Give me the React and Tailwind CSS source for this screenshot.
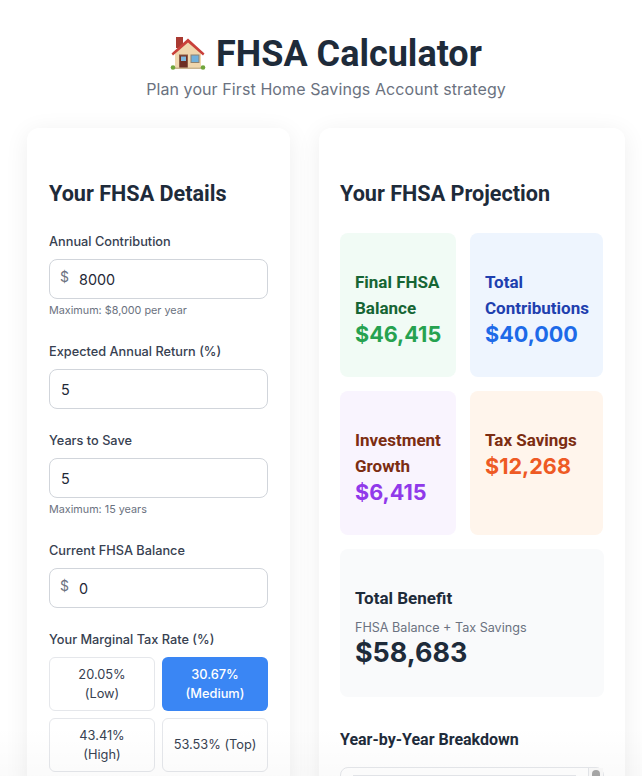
const House = () => (
  <svg width="36" height="36" viewBox="0 0 36 36" className="shrink-0">
    <rect x="6" y="1" width="7" height="11" fill="#a93a32" />
    <path d="M5 17 L18 5 L31 17 V32 H5 Z" fill="#efd6ad" />
    <path d="M1.5 17.5 L18 2.5 L34.5 17.5 L33 19.5 L18 6.5 L3 19.5 Z" fill="#c9403a" />
    <rect x="9" y="18.5" width="9" height="14" fill="#8a5a44" />
    <rect x="10" y="19.5" width="7" height="13" fill="#6e2f25" />
    <rect x="11" y="20.5" width="5" height="4.5" fill="#7cb7de" />
    <rect x="20.5" y="18.5" width="9" height="8.5" fill="#8d8272" />
    <rect x="21.5" y="19.5" width="7" height="6.5" fill="#6fb0dc" />
    <rect x="5" y="31.5" width="26" height="1.5" fill="#c9b48f" />
    <circle cx="3" cy="31.5" r="2.3" fill="#6fa53a" />
    <circle cx="33" cy="31.5" r="2.3" fill="#6fa53a" />
  </svg>
)

const Field = ({ label, value, prefix, hint }) => (
  <div className={hint ? 'mb-[22px]' : 'mb-[21px]'}>
    <label className="block text-[12.75px] leading-[22px] font-medium text-[#374151] mb-[6px]">{label}</label>
    <div className="relative">
      {prefix && <span className="absolute left-[11px] top-[8px] text-sm text-[#6b7280]">$</span>}
      <input
        readOnly
        value={value}
        className={`w-full h-[40px] rounded-lg border border-[#d1d5db] bg-white text-[#1f2937] text-[14.4px] outline-none ${prefix ? 'pl-[29px]' : 'pl-[11px]'}`}
      />
    </div>
    {hint && <p className="text-[10.8px] leading-[16px] text-[#6b7280] mt-[4px]">{hint}</p>}
  </div>
)

const Stat = ({ bg, labelColor, valueColor, label, value }) => (
  <div className={`rounded-lg px-[15px] pt-[36px] h-[144px] ${bg}`}>
    <div className={`font-['Roboto',sans-serif] text-[17px] leading-[26px] font-bold ${labelColor}`}>{label}</div>
    <div className={`text-[21.6px] leading-[26px] font-bold ${valueColor}`}>{value}</div>
  </div>
)

export default function App() {
  return (
    <div className="relative h-[776px] overflow-hidden bg-white font-['Inter',sans-serif]">
      <div className="w-[598px] ml-[27px]">
        <header className="pt-[34px] text-center">
          <h1 className="flex items-center justify-center gap-[10px] font-['Roboto',sans-serif] text-[36px] leading-[40px] font-bold text-[#1e2b3a]">
            <House /> FHSA Calculator
          </h1>
          <p className="mt-[3px] text-[16px] leading-[24px] text-[#6b7280] tracking-[0.09px]">Plan your First Home Savings Account strategy</p>
        </header>

        <main className="mt-[27px] flex gap-[29px] items-start">
          <section className="w-[263px] shrink-0 rounded-xl bg-white shadow-[0_4px_24px_rgba(0,0,0,0.07)] px-[22px] pt-[53px] pb-6">
            <h2 className="font-['Roboto',sans-serif] text-[21.6px] leading-[26px] font-bold text-[#1e2b3a] mb-[24px]">Your FHSA Details</h2>
            <Field label="Annual Contribution" value="8000" prefix hint="Maximum: $8,000 per year" />
            <Field label="Expected Annual Return (%)" value="5" />
            <Field label="Years to Save" value="5" hint="Maximum: 15 years" />
            <Field label="Current FHSA Balance" value="0" prefix />
            <div>
              <label className="block text-[12.75px] leading-[22px] font-medium text-[#374151] mb-[6px]">Your Marginal Tax Rate (%)</label>
              <div className="grid grid-cols-2 gap-[7px] text-[12.8px] leading-[19px] text-[#374151]">
                <button className="h-[54px] pb-[1px] rounded-md border border-[#e5e7eb] bg-white">20.05%<br />(Low)</button>
                <button className="h-[54px] pb-[1px] rounded-md bg-[#3a86f4] text-white font-medium">30.67%<br />(Medium)</button>
                <button className="h-[54px] pb-[1px] rounded-md border border-[#e5e7eb] bg-white">43.41%<br />(High)</button>
                <button className="h-[54px] pb-[1px] rounded-md border border-[#e5e7eb] bg-white">53.53% (Top)</button>
              </div>
            </div>
          </section>

          <section className="w-[306px] shrink-0 rounded-xl bg-white shadow-[0_4px_24px_rgba(0,0,0,0.07)] px-[21px] pt-[53px]">
            <h2 className="font-['Roboto',sans-serif] text-[21.6px] leading-[26px] font-bold text-[#1e2b3a] mb-[26px]">Your FHSA Projection</h2>
            <div className="grid grid-cols-[116px_133px] gap-[14px]">
              <Stat bg="bg-[#f1fbf5]" labelColor="text-[#166534]" valueColor="text-[#26a250]" label="Final FHSA Balance" value="$46,415" />
              <Stat bg="bg-[#eef5fe]" labelColor="text-[#1e40af]" valueColor="text-[#1d6ae8]" label="Total Contributions" value="$40,000" />
              <Stat bg="bg-[#f9f4fe]" labelColor="text-[#7c2d12]" valueColor="text-[#9039ea]" label="Investment Growth" value="$6,415" />
              <Stat bg="bg-[#fff5ec]" labelColor="text-[#7c2d12]" valueColor="text-[#ee5a24]" label="Tax Savings" value="$12,268" />
            </div>
            <div className="mt-[14px] h-[148px] rounded-lg bg-[#f9fafb] px-[15px] pt-[37px]">
              <div className="font-['Roboto',sans-serif] text-[17px] leading-[24px] font-bold text-[#1e2b3a]">Total Benefit</div>
              <div className="mt-[9px] text-[12.6px] leading-[18px] text-[#6b7280]">FHSA Balance + Tax Savings</div>
              <div className="-mt-[2px] text-[26.9px] leading-[34px] font-bold text-[#1e2b3a]">$58,683</div>
            </div>
            <h3 className="mt-[31px] font-['Roboto',sans-serif] text-[16px] leading-[24px] font-bold text-[#1e2b3a]">Year-by-Year Breakdown</h3>
            <div className="mt-[15px] h-[200px] rounded-lg border border-[#e5e7eb] flex">
              <div className="flex-1 px-[12px] pt-[7px]">
                <div className="h-full border-t border-[#e5e7eb] bg-[#f9fafb]" />
              </div>
              <div className="w-[15px] border-l border-[#e5e7eb] bg-[#fafafa] flex justify-center pt-[2px]">
                <div className="w-[8px] h-[60px] rounded-full bg-[#a8a8a8]" />
              </div>
            </div>
          </section>
        </main>
      </div>
      {/* fade along the bottom edge of the window */}
      <div className="absolute inset-x-0 bottom-0 h-[50px] bg-gradient-to-b from-transparent to-black/[0.018] pointer-events-none" />
    </div>
  )
}
